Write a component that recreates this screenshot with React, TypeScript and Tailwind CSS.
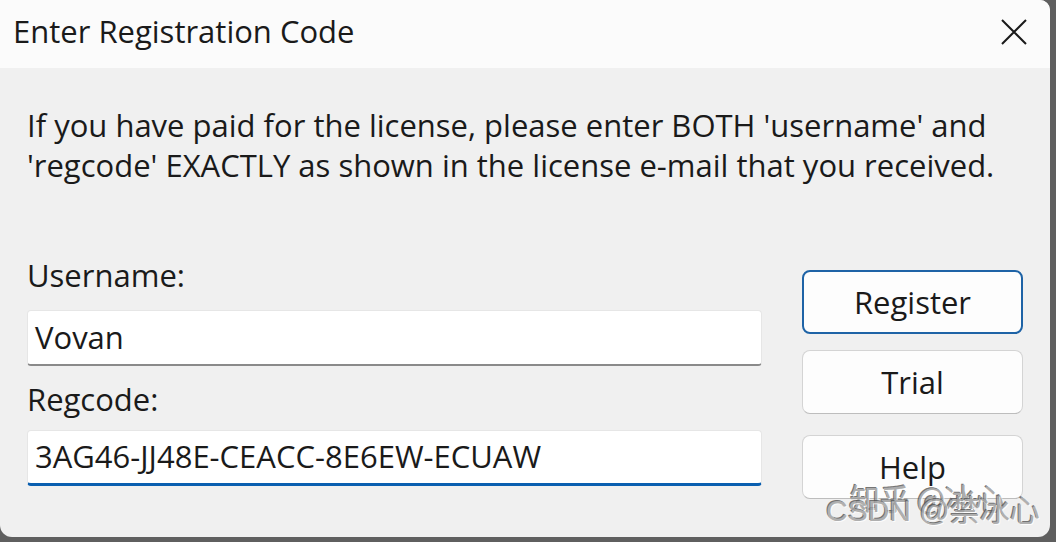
import React from "react";

const font = { fontFamily: '"Open Sans", "Noto Sans", "Liberation Sans", sans-serif' };

export default function App() {
  return (
    <div className="w-[1056px] h-[542px] bg-[#5f5f5f] overflow-hidden relative" style={font}>
      <div className="w-[1050px] h-[537px] bg-[#f0f0f0] rounded-b-[12px] rounded-tr-[10px] overflow-hidden flex flex-col text-[#1a1a1a]">
        <div className="h-[68px] bg-[#fbfbfb] flex items-center justify-between pl-[13px] pr-[22px]">
          <span className="text-[31px] leading-none pb-[6px]">Enter Registration Code</span>
          <svg width="28" height="28" viewBox="0 0 28 28" className="mb-[4px]">
            <path d="M2 2 L26 26 M26 2 L2 26" stroke="#1a1a1a" strokeWidth="2" fill="none" />
          </svg>
        </div>
        <div className="flex flex-col px-[27px] pt-[37px]">
          <p className="text-[31px] leading-[40px] whitespace-nowrap">
            If you have paid for the license, please enter BOTH 'username' and
            <br />
            'regcode' EXACTLY as shown in the license e-mail that you received.
          </p>
          <div className="flex gap-[40px] mt-[70px]">
            <div className="flex-1 flex flex-col">
              <span className="text-[31px] leading-[40px]">Username:</span>
              <div className="mt-[15px] h-[56px] bg-white border border-[#e6e6e6] border-b-[2px] border-b-[#8a8a8a] rounded-[4px] flex items-center pl-[7px] text-[31px]">
                Vovan
              </div>
              <span className="mt-[13px] text-[31px] leading-[40px]">Regcode:</span>
              <div className="mt-[11px] h-[56px] bg-white border border-[#e6e6e6] border-b-[3px] border-b-[#0a5fb0] rounded-[4px] flex items-center pl-[7px] pb-[2px] text-[31px]">
                3AG46-JJ48E-CEACC-8E6EW-ECUAW
              </div>
            </div>
            <div className="w-[221px] flex flex-col pt-[15px]">
              <button className="h-[64px] bg-[#fdfdfd] border-[2px] border-[#1e63a6] rounded-[8px] text-[31px] text-[#1a1a1a]">
                Register
              </button>
              <button className="mt-[16px] h-[64px] bg-[#fdfdfd] border border-[#d4d4d4] border-b-[#bdbdbd] rounded-[8px] text-[31px] text-[#1a1a1a]">
                Trial
              </button>
              <button className="mt-[21px] h-[64px] bg-[#fdfdfd] border border-[#d4d4d4] border-b-[#bdbdbd] rounded-[8px] text-[31px] text-[#1a1a1a]">
                Help
              </button>
            </div>
          </div>
        </div>
      </div>
      <div
        className="absolute left-[850px] top-[482px] text-[30px] leading-none text-[#9a9a9a] opacity-80"
        style={{ fontFamily: '"Noto Sans CJK SC", sans-serif', textShadow: "1px 1px 0 #fff, -1px -1px 0 #555" }}
      >
        知乎 @冰心
      </div>
      <div
        className="absolute left-[826px] top-[496px] text-[30px] leading-none text-[#a0a0a0] opacity-80"
        style={{ fontFamily: '"Liberation Sans", "Noto Sans CJK SC", sans-serif', textShadow: "1px 1px 0 #fff, -1px -1px 0 #555" }}
      >
        CSDN @禁冰心
      </div>
    </div>
  );
}
